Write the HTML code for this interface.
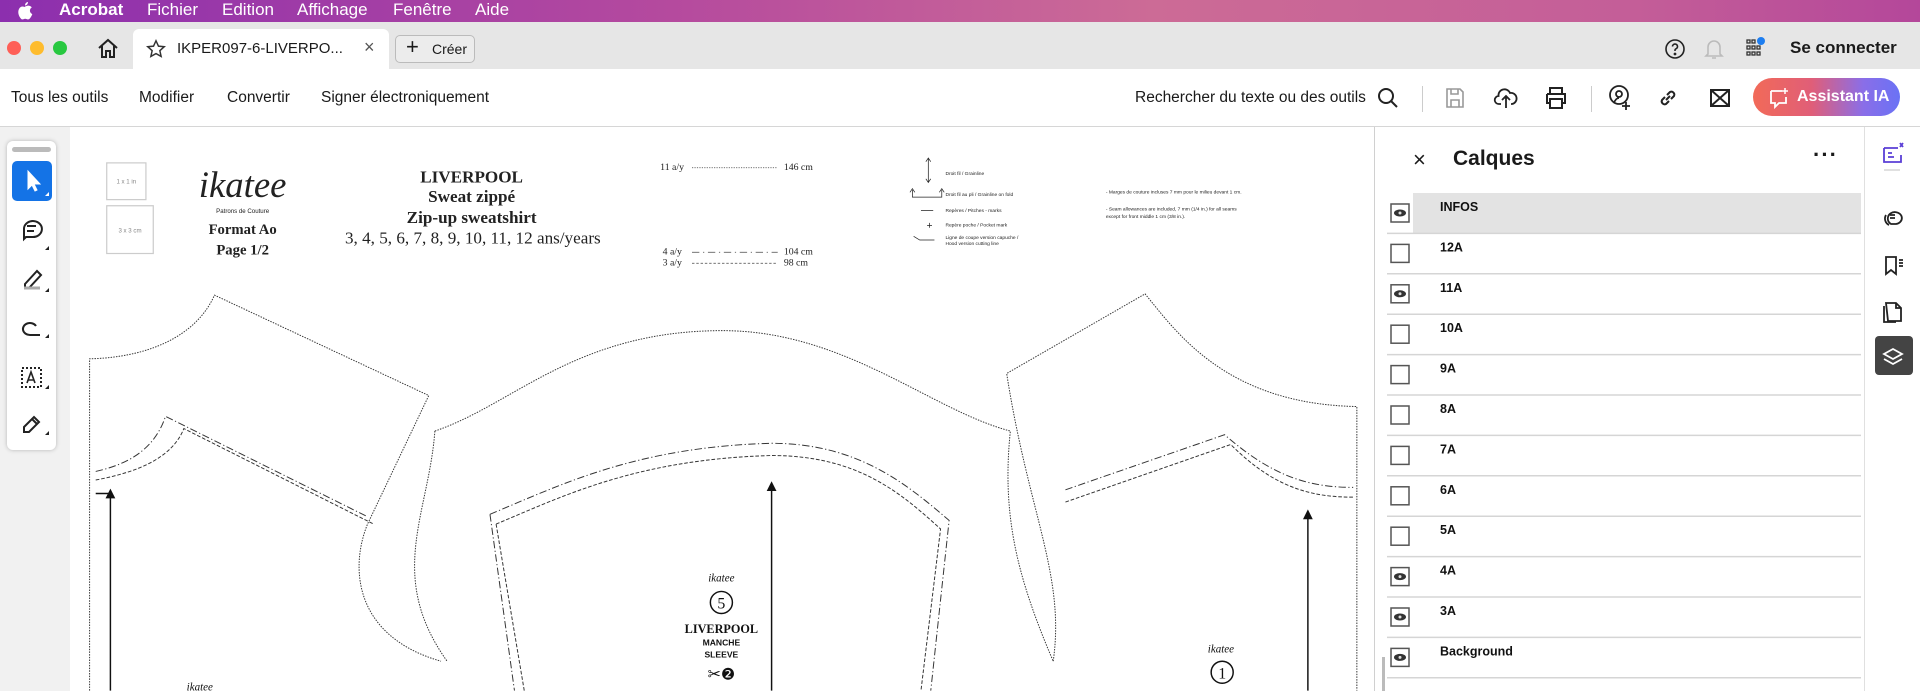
<!DOCTYPE html>
<html><head><meta charset="utf-8"><style>
*{margin:0;padding:0;box-sizing:border-box}
body{width:1920px;height:691px;overflow:hidden;position:relative;font-family:"Liberation Sans",sans-serif;background:#fff;color:#1a1a1a}
.abs{position:absolute}
#menu{left:0;top:0;width:1920px;height:22px;background:linear-gradient(90deg,#8c2fae 0%,#b54a9e 35%,#cc6b96 60%,#c45e98 85%,#b4479a 100%);color:#fff;font-size:17px}
#menu span{position:absolute;top:0;line-height:20px}
#tabbar{left:0;top:22px;width:1920px;height:47px;background:#e6e6e6}
#toolbar{left:0;top:69px;width:1920px;height:58px;background:#fff;border-bottom:1px solid #d6d6d6;font-size:15.5px}
#toolbar span{position:absolute;top:20px}
.dot{width:14px;height:14px;border-radius:50%;top:41px}
#grey{left:0;top:127px;width:70px;height:564px;background:#f1f1f1}
#panel{left:1374px;top:127px;width:490px;height:564px;background:#fff;border-left:1px solid #d0d0d0}
#rail{left:1864px;top:127px;width:56px;height:564px;background:#fff;border-left:1px solid #e0e0e0}
</style></head><body>
<div id="menu" class="abs">
<span style="left:59px;font-weight:bold">Acrobat</span>
<span style="left:147px">Fichier</span>
<span style="left:222px">Edition</span>
<span style="left:297px">Affichage</span>
<span style="left:393px">Fenêtre</span>
<span style="left:475px">Aide</span>
</div>
<svg class="abs" style="left:16px;top:1px" width="18" height="20" viewBox="0 0 18 20" fill="#fff"><path d="M12 1c0 2-1.5 3.5-3 3.5C9 2.5 10.5 1 12 1zM9 5.5c1 0 2.3-1 3.8-.8 1.2.1 2.3.7 3 1.7-2.8 1.7-2.3 5.6.5 6.7-.6 1.7-1.5 3.3-2.6 4.5-1 1-2 1-3 .5-1-.4-2-.4-3 0-1 .5-2 .5-2.8-.5C2.5 14.8 1.5 11 3 8c.8-1.6 2.2-2.5 3.6-2.5 1 0 1.8.5 2.4.5z"/></svg>
<div id="tabbar" class="abs"></div>
<div class="abs dot" style="left:7px;background:#fe5f57"></div>
<div class="abs dot" style="left:30px;background:#febc2e"></div>
<div class="abs dot" style="left:53px;background:#28c840"></div>
<svg class="abs" style="left:96px;top:37px" width="24" height="24" viewBox="0 0 24 24" fill="none" stroke="#222" stroke-width="2"><path d="M3 11L12 3l9 8M6 9v11h4v-6h4v6h4V9"/></svg>
<div class="abs" style="left:133px;top:29px;width:256px;height:40px;background:#fff;border-radius:6px 6px 0 0"></div>
<svg class="abs" style="left:145px;top:38px" width="22" height="22" viewBox="0 0 24 24" fill="none" stroke="#333" stroke-width="1.6"><path d="M12 3l2.7 5.9 6.3.6-4.8 4.3 1.4 6.3L12 17l-5.6 3.1 1.4-6.3L3 9.5l6.3-.6z"/></svg>
<div class="abs" style="left:177px;top:40px;font-size:15px">IKPER097-6-LIVERPO...</div>
<div class="abs" style="left:364px;top:37px;font-size:18px;color:#555">×</div>
<div class="abs" style="left:395px;top:35px;width:80px;height:28px;border:1px solid #bbb;border-radius:5px;background:#ececec;font-size:14px;line-height:26px;padding-left:36px">Créer</div>
<div class="abs" style="left:406px;top:34px;font-size:22px">+</div>
<svg class="abs" style="left:1663px;top:37px" width="24" height="24" viewBox="0 0 24 24" fill="none" stroke="#222" stroke-width="1.6"><circle cx="12" cy="12" r="9"/><path d="M9.5 9.5a2.5 2.5 0 1 1 3.5 2.3c-.7.3-1 .8-1 1.5v.7"/><circle cx="12" cy="17" r=".6" fill="#222"/></svg>
<svg class="abs" style="left:1703px;top:37px" width="22" height="24" viewBox="0 0 22 24" fill="none" stroke="#bbb" stroke-width="1.6"><path d="M5 17V10a6 6 0 0 1 12 0v7l2 2H3zM9 21h4"/></svg>
<svg class="abs" style="left:1744px;top:36px" width="26" height="26" viewBox="0 0 26 26" fill="none" stroke="#333" stroke-width="1.3"><rect x="3" y="4" width="3" height="3"/><rect x="8" y="4" width="3" height="3"/><rect x="3" y="10" width="3" height="3"/><rect x="8" y="10" width="3" height="3"/><rect x="13" y="10" width="3" height="3"/><rect x="3" y="16" width="3" height="3"/><rect x="8" y="16" width="3" height="3"/><rect x="13" y="16" width="3" height="3"/><circle cx="17" cy="5" r="4" fill="#1e7ef0" stroke="none"/></svg>
<div class="abs" style="left:1790px;top:38px;font-size:17px;font-weight:bold">Se connecter</div>

<div id="toolbar" class="abs">
<span style="left:11px">Tous les outils</span>
<span style="left:139px">Modifier</span>
<span style="left:227px">Convertir</span>
<span style="left:321px">Signer électroniquement</span>
<span style="left:1135px">Rechercher du texte ou des outils</span>
</div>
<svg class="abs" style="left:1376px;top:86px" width="24" height="24" viewBox="0 0 24 24" fill="none" stroke="#222" stroke-width="2"><circle cx="10" cy="10" r="7"/><path d="M15 15l6 6"/></svg>
<div class="abs" style="left:1422px;top:86px;width:1px;height:26px;background:#ccc"></div>
<svg class="abs" style="left:1443px;top:86px" width="24" height="24" viewBox="0 0 24 24" fill="none" stroke="#999" stroke-width="1.6"><path d="M4 3h13l3 3v15H4zM8 3v5h7V3M8 21v-7h8v7"/></svg>
<svg class="abs" style="left:1493px;top:85px" width="26" height="26" viewBox="0 0 26 26" fill="none" stroke="#222" stroke-width="1.8"><path d="M8 19H6a4 4 0 0 1-.5-8A6 6 0 0 1 17 8a4.5 4.5 0 0 1 2 11h-1M13 23V12M9 15l4-4 4 4"/></svg>
<svg class="abs" style="left:1543px;top:85px" width="26" height="26" viewBox="0 0 26 26" fill="none" stroke="#222" stroke-width="2"><path d="M7 9V3h12v6M4 9h18v9h-3M7 18H4V9M7 14h12v9H7z"/></svg>
<div class="abs" style="left:1591px;top:86px;width:1px;height:26px;background:#ccc"></div>
<svg class="abs" style="left:1606px;top:84px" width="28" height="28" viewBox="0 0 28 28" fill="none" stroke="#222" stroke-width="1.8"><circle cx="13" cy="11" r="9"/><circle cx="13" cy="10" r="3"/><path d="M8 19c1-3 3-5 5-5M20 18v8M16 22h8"/></svg>
<svg class="abs" style="left:1656px;top:86px" width="24" height="24" viewBox="0 0 24 24" fill="none" stroke="#222" stroke-width="2"><path d="M10 14l4-4M9 11l-3 3a3 3 0 0 0 4 4l3-3M15 13l3-3a3 3 0 0 0-4-4l-3 3"/></svg>
<svg class="abs" style="left:1708px;top:86px" width="24" height="24" viewBox="0 0 24 24" fill="none" stroke="#222" stroke-width="2"><rect x="3" y="4" width="18" height="16"/><path d="M3 4l18 16M21 4L3 20"/></svg>
<div class="abs" style="left:1753px;top:78px;width:147px;height:38px;border-radius:19px;background:linear-gradient(90deg,#f26a58,#e05e78 40%,#8a6ee8 75%,#6a72f5);color:#fff;font-weight:bold;font-size:16px;line-height:38px;padding-left:44px">Assistant IA</div>
<svg class="abs" style="left:1767px;top:86px" width="24" height="24" viewBox="0 0 24 24" fill="none" stroke="#fff" stroke-width="1.8"><path d="M4 5h11M4 5v12h4v4l4-4h7v-6"/><path d="M18 2v6M15 5h6" stroke-width="1.5"/></svg>

<div id="grey" class="abs"></div>
<div class="abs" style="left:7px;top:141px;width:49px;height:309px;background:#fff;border-radius:6px;box-shadow:0 0 4px rgba(0,0,0,.25)"></div>
<div class="abs" style="left:12px;top:147px;width:39px;height:5px;background:#bbb;border-radius:3px"></div>
<div class="abs" style="left:12px;top:161px;width:40px;height:40px;background:#1473e6;border-radius:5px"></div>
<svg class="abs" style="left:12px;top:161px" width="40" height="290" viewBox="0 0 40 290" fill="none" stroke="#222" stroke-width="2">
<path d="M16 10v18l4-4 3 6 2-1-3-6h6z" fill="#fff" stroke="#fff" stroke-width="1"/><path d="M33 35l4-4v4z" fill="#fff" stroke="none"/>
<g transform="translate(0,9)"><path d="M12 58a9 8 0 1 1 8 9h-6l-2 2z M15 56h9M15 61h7"/><path d="M33 80l4-4v4z" fill="#222" stroke="none"/></g>
<g transform="translate(0,6)"><path d="M13 117l12-13 4 4-12 13h-4z"/><path d="M12 121h16" stroke="#aaa" stroke-width="3"/><path d="M33 125l4-4v4z" fill="#222" stroke="none"/></g>
<g transform="translate(0,7)"><path d="M24 158a7 6 0 1 0-6 9h10"/><path d="M33 170l4-4v4z" fill="#222" stroke="none"/></g>
<g transform="translate(0,8)"><rect x="10" y="199" width="19" height="19" stroke-dasharray="2 2"/><path d="M15 214l4-11 4 11M16 211h6" stroke-width="1.6"/><path d="M33 220l4-4v4z" fill="#222" stroke="none"/></g>
<g transform="translate(0,4)"><path d="M12 262l10-10 5 5-10 10h-5zM20 254l5 5"/><path d="M33 270l4-4v4z" fill="#222" stroke="none"/></g>
</svg>

<svg class="abs" style="left:70px;top:127px" width="1304" height="564" viewBox="57 103.7 1065 460.6">
<g font-family="Liberation Serif,serif" fill="#222">
<rect x="87" y="133" width="32" height="30" fill="none" stroke="#ccc"/><text x="103" y="150" font-size="5" text-anchor="middle" fill="#888" font-family="Liberation Sans">1 x 1 in</text>
<rect x="87" y="168" width="38" height="39" fill="none" stroke="#ccc"/><text x="106" y="190" font-size="5" text-anchor="middle" fill="#888" font-family="Liberation Sans">3 x 3 cm</text>
<text x="198" y="161" font-size="30" font-style="italic" text-anchor="middle">ikatee</text>
<text x="198" y="174" font-size="5" text-anchor="middle" font-family="Liberation Sans">Patrons de Couture</text>
<text x="198" y="191" font-size="12" font-weight="bold" text-anchor="middle">Format Ao</text>
<text x="198" y="208" font-size="12" font-weight="bold" text-anchor="middle">Page 1/2</text>
<text x="385" y="149" font-size="14" font-weight="bold" text-anchor="middle">LIVERPOOL</text>
<text x="385" y="165" font-size="14" font-weight="bold" text-anchor="middle">Sweat zippé</text>
<text x="385" y="182" font-size="14" font-weight="bold" text-anchor="middle">Zip-up sweatshirt</text>
<text x="386" y="199" font-size="14" text-anchor="middle">3, 4, 5, 6, 7, 8, 9, 10, 11, 12 ans/years</text>
<text x="539" y="139" font-size="8">11 a/y</text><text x="640" y="139" font-size="8">146 cm</text>
<path d="M565 137h70" stroke="#444" stroke-width=".6" stroke-dasharray="1 1"/>
<text x="541" y="208" font-size="8">4 a/y</text><text x="640" y="208" font-size="8">104 cm</text>
<path d="M565 206h70" stroke="#444" stroke-width=".6" stroke-dasharray="6 3 1 3"/>
<text x="541" y="217" font-size="8">3 a/y</text><text x="640" y="217" font-size="8">98 cm</text>
<path d="M565 215h70" stroke="#444" stroke-width=".6" stroke-dasharray="2 1.5"/>
<g font-family="Liberation Sans" font-size="4">
<path d="M758 129v20M756 132l2-3 2 3M756 146l2 3 2-3M745 155v6h24v-6M743 157l2-3 2 3M767 157l2-3 2 3M752 172h10M757 184h4M759 182v4M746 193l5 3h12" stroke="#222" stroke-width=".6" fill="none"/>
<text x="772" y="143">Droit fil / Grainline</text><text x="772" y="160">Droit fil au pli / Grainline on fold</text>
<text x="772" y="173">Repères / Pitches - marks</text><text x="772" y="185">Repère poche / Pocket mark</text>
<text x="772" y="195">Ligne de coupe version capuche /</text><text x="772" y="200">Hood version cutting line</text>
<text x="903" y="158">- Marges de couture incluses 7 mm pour le milieu devant 1 cm.</text>
<text x="903" y="172">- Seam allowances are included, 7 mm (1/4 in.) for all seams</text>
<text x="903" y="178">except for front middle 1 cm (3/8 in.).</text>
</g>
</g>
<g fill="none" stroke="#333" stroke-width=".8">
<g stroke-dasharray="1.2 1">
<path d="M73 564V293C120 292 160 275 175 241L350 323L300 428C285 465 290 520 360 540"/>
<path d="M355 352C350 420 315 470 365 540M355 352C420 330 470 270 590 270C690 270 760 335 825 352C818 420 830 470 860 540"/>
<path d="M860 540C870 470 840 420 822 305L935 240C960 270 1000 330 1108 332V564"/>
</g>
<path d="M78 385C100 380 125 370 135 340L300 422" stroke-dasharray="6 2 1 2"/>
<path d="M78 392C110 386 140 375 150 350L305 428" stroke-dasharray="3 1.5"/>
<path d="M400 420C460 395 520 365 630 362C700 362 740 395 775 425L760 564M400 420L420 564" stroke-dasharray="6 2 1 2"/>
<path d="M405 428C460 405 520 375 630 372C700 372 735 402 768 432L752 564M405 428L428 564" stroke-dasharray="3 1.5"/>
<path d="M870 400L1000 355C1040 390 1070 398 1105 398" stroke-dasharray="6 2 1 2"/>
<path d="M870 410L1005 363C1040 398 1070 406 1105 406" stroke-dasharray="3 1.5"/>
<path d="M90 406V564M630 400V564M1068 423V564M78 403h12" stroke="#111" stroke-width="1.2"/>
</g>
<path d="M90 399l-4 8h8zM630 393l-4 8h8zM1068 416l-4 8h8z" fill="#111"/>
<g font-family="Liberation Serif,serif" fill="#111" text-anchor="middle">
<text x="589" y="475" font-size="9" font-style="italic">ikatee</text>
<circle cx="589" cy="492" r="9" fill="none" stroke="#111" stroke-width="1.2"/><text x="589" y="497" font-size="13">5</text>
<text x="589" y="517" font-size="10" font-weight="bold">LIVERPOOL</text>
<text x="589" y="527" font-size="7" font-weight="bold" font-family="Liberation Sans">MANCHE</text>
<text x="589" y="537" font-size="7" font-weight="bold" font-family="Liberation Sans">SLEEVE</text>
<text x="589" y="555" font-size="13" font-family="DejaVu Sans">✂❷</text>
<text x="997" y="533" font-size="9" font-style="italic">ikatee</text>
<circle cx="998" cy="549" r="9" fill="none" stroke="#111" stroke-width="1.2"/><text x="998" y="554" font-size="13">1</text>
<text x="163" y="564" font-size="9" font-style="italic">ikatee</text>
</g>
</svg>

<div id="panel" class="abs">
<div class="abs" style="left:38px;top:20px;font-size:22px">×</div>
<div class="abs" style="left:78px;top:20px;font-size:21px;font-weight:bold">Calques</div>
<div class="abs" style="left:438px;top:15px;font-size:22px;font-weight:bold;letter-spacing:1px">···</div>
</div>
<svg class="abs" style="left:1374px;top:127px" width="490" height="564" viewBox="0 0 490 564">
<rect x="39" y="66" width="448" height="40" fill="#e3e3e3"/>
<g stroke="#d5d5d5" stroke-width="1.5"><path d="M13 106.4h474M13 146.8h474M13 187.2h474M13 227.6h474M13 268h474M13 308.4h474M13 348.8h474M13 389.2h474M13 429.6h474M13 470h474M13 510.4h474M13 550.8h474"/></g>
<g fill="#fff" stroke="#555" stroke-width="1.5">
<rect x="17" y="77" width="18" height="18"/><rect x="17" y="117.4" width="18" height="18"/><rect x="17" y="157.8" width="18" height="18"/><rect x="17" y="198.2" width="18" height="18"/><rect x="17" y="238.6" width="18" height="18"/><rect x="17" y="279" width="18" height="18"/><rect x="17" y="319.4" width="18" height="18"/><rect x="17" y="359.8" width="18" height="18"/><rect x="17" y="400.2" width="18" height="18"/><rect x="17" y="440.6" width="18" height="18"/><rect x="17" y="481" width="18" height="18"/><rect x="17" y="521.4" width="18" height="18"/></g>
<g fill="#333"><ellipse cx="26" cy="86" rx="6" ry="3.5"/><ellipse cx="26" cy="166.8" rx="6" ry="3.5"/><ellipse cx="26" cy="449.6" rx="6" ry="3.5"/><ellipse cx="26" cy="490" rx="6" ry="3.5"/><ellipse cx="26" cy="530.4" rx="6" ry="3.5"/></g>
<g fill="#ddd"><circle cx="26" cy="86" r="1.5"/><circle cx="26" cy="166.8" r="1.5"/><circle cx="26" cy="449.6" r="1.5"/><circle cx="26" cy="490" r="1.5"/><circle cx="26" cy="530.4" r="1.5"/></g>
<g font-family="Liberation Sans" font-weight="bold" font-size="12.5" fill="#111">
<text x="66" y="84">INFOS</text><text x="66" y="124.4">12A</text><text x="66" y="164.8">11A</text><text x="66" y="205.2">10A</text><text x="66" y="245.6">9A</text><text x="66" y="286">8A</text><text x="66" y="326.4">7A</text><text x="66" y="366.8">6A</text><text x="66" y="407.2">5A</text><text x="66" y="447.6">4A</text><text x="66" y="488">3A</text><text x="66" y="528.4">Background</text>
</g>
<rect x="8" y="530" width="3" height="34" fill="#bbb"/>
</svg>
<div id="rail" class="abs"></div>
<div class="abs" style="left:1875px;top:336px;width:38px;height:39px;background:#444;border-radius:4px"></div>
<svg class="abs" style="left:1864px;top:127px" width="56" height="260" viewBox="0 0 56 260" fill="none" stroke-width="1.8">
<path d="M20 21h14M20 21v14h17v-7M24 26h4M24 30h6" stroke="#5a3fd6"/><path d="M36 16l3 4M39 16l-3 4" stroke="#5a3fd6"/>
<path d="M20 43h16" stroke="#ddd"/>
<path d="M24 90a7 6 0 1 1 8 7h-5a6 6 0 0 1-3-7zM26 88h5M26 91h5M22 88a7 7 0 0 0 3 10" stroke="#222"/>
<path d="M22 130v17l5-4 5 4v-17zM35 133h4M35 136h4M35 139h4" stroke="#222"/>
<path d="M22 176h10l5 5v13H24zM32 176v5h5M20 179v16h12" stroke="#222"/>
<path d="M29 222l9 5-9 5-9-5zM20 232l9 5 9-5" stroke="#fff"/>
</svg>
</body></html>
